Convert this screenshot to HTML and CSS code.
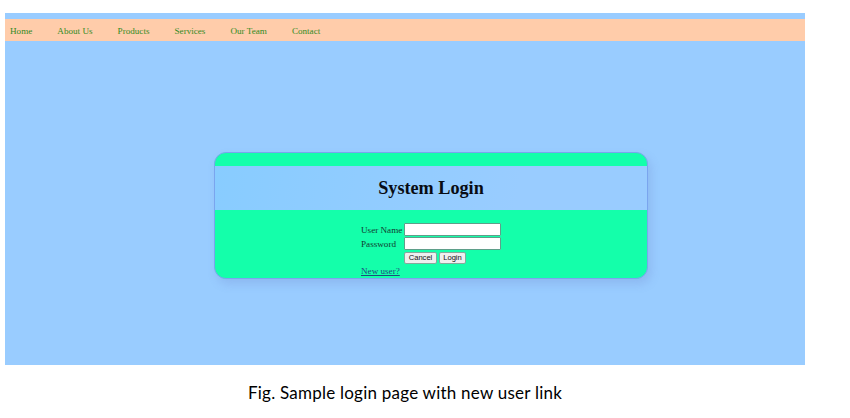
FILE: index.html
```html
<!DOCTYPE html>
<html lang="en">
<head>
<meta charset="utf-8">
<title>System Login</title>
<link rel="stylesheet" href="styles.css">
</head>
<body>
<figure class="figure">
  <div class="page">
    <nav class="nav">
      <a>Home</a><a>About Us</a><a>Products</a><a>Services</a><a>Our Team</a><a>Contact</a>
    </nav>
    <main class="card">
      <h1 class="title">System Login</h1>
      <form class="form">
        <label for="user">User Name</label><input class="field" id="user" type="text">
        <label for="pass">Password</label><input class="field" id="pass" type="password">
        <div class="actions"><button type="button" class="cancel">Cancel</button><button type="button" class="login">Login</button></div>
        <a class="new-user" href="#">New user?</a>
      </form>
    </main>
  </div>
  <figcaption class="caption"><span>Fig. Sample login page with new user link</span></figcaption>
</figure>
</body>
</html>
```
FILE: styles.css
```css
* { box-sizing: border-box; }
body { margin: 0; background: #fff; overflow: hidden; }
.figure { margin: 13px 0 0 5px; width: 800px; }
.page {
  height: 352px;
  padding-top: 6px;
  background: #99ccff;
  font: 9.15px "Liberation Serif", serif;
}
.nav {
  display: flex;
  gap: 25px;
  height: 22px;
  padding-left: 5px;
  background: #ffccaa;
  color: #348b24;
  line-height: 24px;
}
.card {
  width: 434px;
  height: 127px;
  margin: 111px 0 0 209px;
  padding-top: 13px;
  border: 1px solid #7aa5ee;
  border-radius: 12px;
  background: #14ffaa;
  box-shadow: 3px 5px 10px rgba(100, 120, 190, .22);
}
.title {
  height: 44px;
  margin: 0;
  background: linear-gradient(100deg, #88ccff, #99ccff 70%);
  color: #080c14;
  font-size: 18.2px;
  line-height: 44px;
  text-align: center;
}
.form {
  display: grid;
  grid-template-columns: 42px 97px;
  grid-template-rows: 13px 13px 13px 12px;
  column-gap: 1px;
  row-gap: 1px;
  margin: 13px 0 0 146px;
  color: #123c30;
  line-height: 14px;
}
.field {
  width: 97px;
  height: 13px;
  padding: 0 2px;
  border: 1px solid #5f9f8a;
  border-radius: 1px;
  background: #fff;
  font-size: 8px;
}
.actions { grid-column: 2; display: flex; gap: 2px; padding-top: 1px; }
.actions button {
  height: 12px;
  padding: 0;
  border: 1px solid #85a89c;
  border-radius: 2px;
  background: #efefef;
  color: #111;
  font: 7.6px/10px "Liberation Sans", sans-serif;
}
.cancel { width: 33px; }
.login { width: 27px; }
.new-user { grid-column: 1 / 3; color: #204a80; line-height: 13px; }
.caption {
  margin-top: 16px;
  padding-left: 243px;
  color: #000;
  font: 17px/24px Lato, sans-serif;
  letter-spacing: .23px;
  white-space: nowrap;
}
```
